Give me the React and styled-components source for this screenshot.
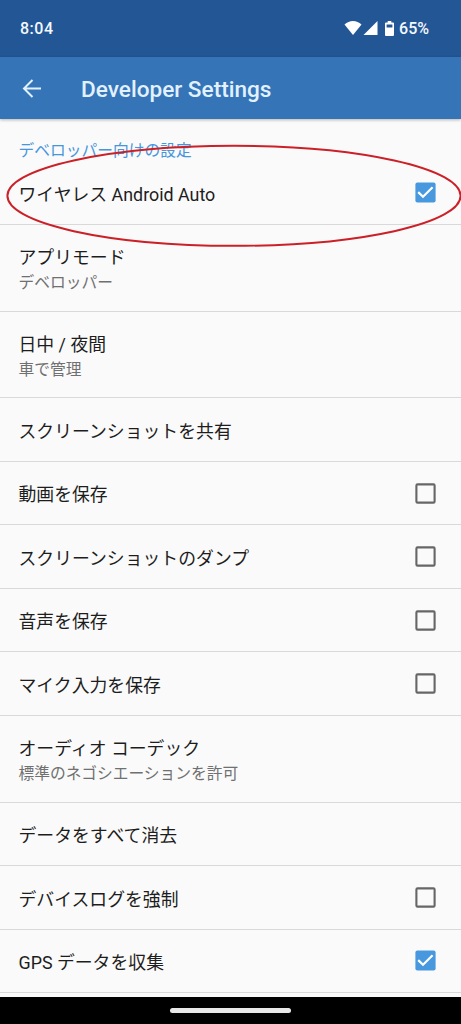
import React from "react";
import styled, { createGlobalStyle } from "styled-components";

const GlobalStyle = createGlobalStyle`
  * { box-sizing: border-box; }
  body { margin: 0; background: #fafafa; }
`;

const Screen = styled.div`
  position: relative;
  display: flex;
  flex-direction: column;
  width: 461px;
  height: 1024px;
  overflow: hidden;
  background: #fafafa;
  font-family: Roboto, "Noto Sans CJK JP", sans-serif;
`;

const StatusBar = styled.div`
  display: flex;
  flex: none;
  align-items: center;
  justify-content: space-between;
  height: 57px;
  padding: 1px 32px 0 20px;
  background: #235695;
  color: #f4f9ff;
  font: 500 16px/20px Roboto, sans-serif;
`;

const Clock = styled.span`
  letter-spacing: 0.5px;
`;

const StatusIcons = styled.div`
  display: flex;
  align-items: center;
`;

const StatusGlyph = styled.svg`
  display: block;
  flex: none;
  margin-right: ${(p) => p.$gap}px;
  margin-top: -2px;
  fill: #fff;
`;

const AppBar = styled.header`
  display: flex;
  flex: none;
  align-items: center;
  gap: 38px;
  height: 62px;
  padding: 2px 22px 0;
  background: #3474b7;
  box-shadow: 0 1px 3px rgba(0, 0, 0, 0.28);
  color: #e2f1ff;
  z-index: 1;
`;

const BackIcon = styled.svg`
  display: block;
  margin-top: -2px;
  width: 21px;
  height: 21px;
  fill: none;
  stroke: #e2f1ff;
  stroke-width: 2;
`;

const Title = styled.h1`
  margin: 2px 0 0;
  font-size: 22.6px;
  font-weight: 500;
  line-height: 28px;
`;

const Settings = styled.main`
  flex: 1;
  min-height: 0;
  overflow: hidden;
`;

const Category = styled.h2`
  height: 42.3px;
  margin: 0;
  padding: 20px 18.5px 0;
  color: #4696dc;
  font-size: 15.75px;
  font-weight: 400;
  line-height: 23px;
`;

const Row = styled.div`
  display: flex;
  align-items: center;
  justify-content: space-between;
  height: ${(p) => (p.$tall ? 86.8 : 63.5)}px;
  padding: ${(p) => (p.$tall ? 5 : 3.2)}px 25px 0 18.5px;
  border-bottom: 1px solid #d9d9d9;
`;

const RowTitle = styled.div`
  color: #1d1d1d;
  font-size: 17.85px;
  line-height: 25px;
`;

const Summary = styled.div`
  color: #707070;
  font-size: 15.75px;
  line-height: 25px;
`;

const CheckIcon = styled.svg`
  display: block;
  flex: none;
  margin-top: -3.2px;
  width: 21px;
  height: 21px;
`;

const NavBar = styled.div`
  display: flex;
  flex: none;
  align-items: center;
  justify-content: center;
  height: 27px;
  background: #000;
`;

const HomePill = styled.div`
  width: 121px;
  height: 5px;
  border-radius: 3px;
  background: #e8e8e8;
`;

const Annotation = styled.svg`
  position: absolute;
  left: 0;
  top: 140px;
  z-index: 2;
  fill: none;
  stroke: #cb2027;
  stroke-width: 2;
  pointer-events: none;
`;

const items = [
  { title: "ワイヤレス Android Auto", checked: true },
  { title: "アプリモード", summary: "デベロッパー" },
  { title: "日中 / 夜間", summary: "車で管理" },
  { title: "スクリーンショットを共有" },
  { title: "動画を保存", checked: false },
  { title: "スクリーンショットのダンプ", checked: false },
  { title: "音声を保存", checked: false },
  { title: "マイク入力を保存", checked: false },
  { title: "オーディオ コーデック", summary: "標準のネゴシエーションを許可" },
  { title: "データをすべて消去" },
  { title: "デバイスログを強制", checked: false },
  { title: "GPS データを収集", checked: true },
];

function Checkbox({ checked }) {
  return (
    <CheckIcon viewBox="0 0 21 21">
      {checked ? (
        <>
          <rect x="0.4" y="0.4" width="20.2" height="20.2" rx="2" fill="#4798de" />
          <path d="M3.2 10.1 8 14.8 17.6 5.2" fill="none" stroke="#fff" strokeWidth="2.2" />
        </>
      ) : (
        <rect x="1.4" y="1.4" width="18.2" height="18.2" rx="1.2" fill="none" stroke="#666" strokeWidth="2.1" />
      )}
    </CheckIcon>
  );
}

function SettingRow({ title, summary, checked }) {
  return (
    <Row $tall={Boolean(summary)}>
      <div>
        <RowTitle>{title}</RowTitle>
        {summary && <Summary>{summary}</Summary>}
      </div>
      {checked !== undefined && <Checkbox checked={checked} />}
    </Row>
  );
}

export default function App() {
  return (
    <Screen>
      <GlobalStyle />
      <StatusBar>
        <Clock>8:04</Clock>
        <StatusIcons>
          <StatusGlyph $gap={1} width="18" height="14" viewBox="0 0 18 14">
            <path d="M9 14 .5 3.5C3 1.3 5.800 0 9 0s6 1.300 8.500 3.500Z" />
          </StatusGlyph>
          <StatusGlyph $gap={7} width="15" height="14" viewBox="0 0 15 14">
            <path d="M14.500 0V14H.5Z" />
          </StatusGlyph>
          <StatusGlyph $gap={5} width="9" height="15" viewBox="0 0 9 15">
            <path fillRule="evenodd" d="M2.700 0h3.600v1.500H8q1 0 1 1V14q0 1-1 1H1q-1 0-1-1V2.500q0-1 1-1h1.700ZM1.600 3.500v3h5.800v-3Z" />
          </StatusGlyph>
          <span>65%</span>
        </StatusIcons>
      </StatusBar>
      <AppBar>
        <BackIcon viewBox="0 0 21 21">
          <path d="M19 10.500H2.500M10.500 2 2 10.500l8.500 8.500" />
        </BackIcon>
        <Title>Developer Settings</Title>
      </AppBar>
      <Settings>
        <Category>デベロッパー向けの設定</Category>
        {items.map((item) => (
          <SettingRow key={item.title} {...item} />
        ))}
      </Settings>
      <NavBar>
        <HomePill />
      </NavBar>
      <Annotation width="461" height="112" viewBox="0 0 461 112">
        <ellipse cx="234" cy="55.800" rx="226.600" ry="50" />
      </Annotation>
    </Screen>
  );
}
